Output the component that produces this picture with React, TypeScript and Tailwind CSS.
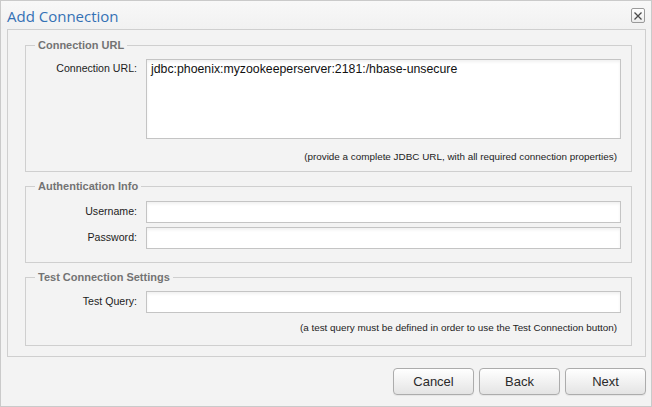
import React from "react";

const sans = "font-['Liberation_Sans',Arial,sans-serif]";

const Legend = ({ children }: { children: React.ReactNode }) => (
  <span className="absolute -top-[8px] left-[9px] px-[3px] bg-[#f3f3f3] text-[11px] leading-[14px] font-bold text-[#737373]">
    {children}
  </span>
);

const Field = ({ label, className = "" }: { label: string; className?: string }) => (
  <div className={`flex items-center ${className}`}>
    <label className="w-[111px] text-right text-[10.6px] text-[#1c1c1c]">{label}</label>
    <input
      type="text"
      className="ml-[9px] flex-1 h-[22px] bg-white border border-[#c4c4c4] shadow-[inset_0_2px_3px_rgba(0,0,0,0.06)] outline-none px-[4px] text-[12px]"
    />
  </div>
);

const Button = ({ children }: { children: React.ReactNode }) => (
  <button className="w-[81px] h-[27px] rounded-[4px] border border-[#acacac] bg-gradient-to-b from-[#ffffff] to-[#e4e4e4] shadow-[0_1px_1px_rgba(0,0,0,0.06)] text-[13px] text-[#2a2a2a]">
    {children}
  </button>
);

export default function App() {
  return (
    <div className={`w-[652px] h-[407px] border border-[#cacaca] bg-[#f3f3f3] flex flex-col ${sans}`}>
      {/* title bar */}
      <div className="h-[28px] flex items-center justify-between pl-[6px] pr-[6px] bg-gradient-to-b from-[#f8f8f8] to-[#f1f1f1]">
        <span className="font-['Open_Sans',sans-serif] text-[15px] text-[#3471b5] leading-none mt-[3px]">Add Connection</span>
        <button className="w-[14px] h-[15px] rounded-[2px] border border-[#9a9a9a] bg-gradient-to-b from-white to-[#ececec] flex items-center justify-center mt-[1px]">
          <svg width="8" height="8" viewBox="0 0 8 8">
            <path d="M0.5 0.5L7.5 7.5M7.5 0.5L0.5 7.5" stroke="#4a4a4a" strokeWidth="1.3" />
          </svg>
        </button>
      </div>

      {/* main panel */}
      <div className="ml-[6px] w-[639px] h-[328px] border border-[#cfcfcf] pt-[15px] pl-[17px]">
        <div className="w-[607px] flex flex-col gap-[14px]">
          {/* Connection URL */}
          <div className="relative h-[127px] border border-[#cfcfcf] pt-[13px] pr-[10px]">
            <Legend>Connection URL</Legend>
            <div className="flex items-start">
              <label className="w-[111px] text-right text-[10.6px] text-[#1c1c1c] pt-[2px]">Connection URL:</label>
              <textarea
                className="ml-[9px] flex-1 h-[80px] bg-white border border-[#c4c4c4] shadow-[inset_0_2px_3px_rgba(0,0,0,0.06)] outline-none resize-none px-[4px] pt-[1px] text-[12.3px] leading-[16px] text-[#111]"
                defaultValue="jdbc:phoenix:myzookeeperserver:2181:/hbase-unsecure"
              />
            </div>
            <p className="mt-[11px] pr-[4px] text-right text-[9.9px] leading-[13px] text-[#1c1c1c]">
              (provide a complete JDBC URL, with all required connection properties)
            </p>
          </div>

          {/* Authentication Info */}
          <div className="relative h-[77px] border border-[#cfcfcf] pt-[14px] pr-[10px]">
            <Legend>Authentication Info</Legend>
            <Field label="Username:" />
            <Field label="Password:" className="mt-[4px]" />
          </div>

          {/* Test Connection Settings */}
          <div className="relative h-[69px] border border-[#cfcfcf] pt-[13px] pr-[10px]">
            <Legend>Test Connection Settings</Legend>
            <Field label="Test Query:" />
            <p className="mt-[8px] pr-[4px] text-right text-[9.9px] leading-[13px] text-[#1c1c1c]">
              (a test query must be defined in order to use the Test Connection button)
            </p>
          </div>
        </div>
      </div>

      {/* buttons */}
      <div className="ml-[6px] w-[639px] mt-[11px] flex justify-end gap-[5px]">
        <Button>Cancel</Button>
        <Button>Back</Button>
        <Button>Next</Button>
      </div>
    </div>
  );
}
